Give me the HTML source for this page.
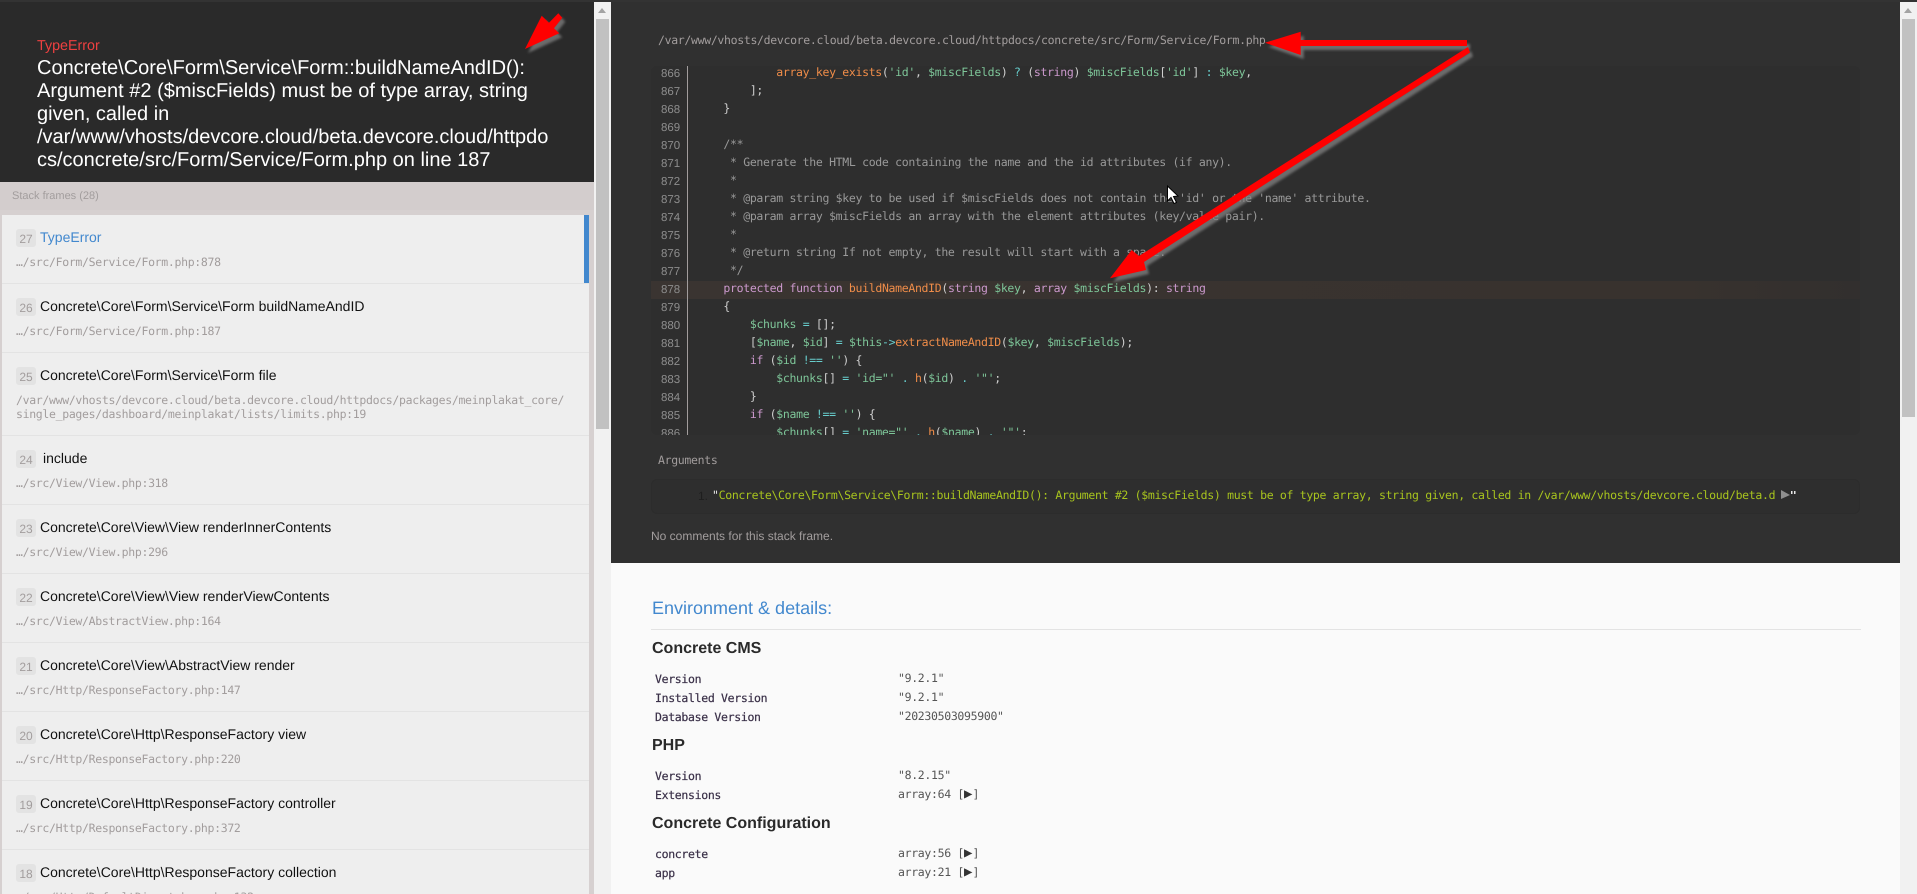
<!DOCTYPE html>
<html lang="en"><head><meta charset="utf-8"><title>TypeError</title>
<style>
*{box-sizing:border-box}
html,body{margin:0;padding:0;width:1917px;height:894px;overflow:hidden;background:#fafafa;text-rendering:geometricPrecision}
body{position:relative;font-family:"Liberation Sans",Arial,sans-serif;color:#222}
.a{position:absolute;white-space:nowrap}
.m{font-family:"DejaVu Sans Mono","Liberation Mono",monospace;font-size:11.5px;letter-spacing:-.32px}
#top{left:0;top:0;width:1917px;height:2px;background:#333;z-index:5}
.hd{left:0;top:0;width:594px;height:182px;background:#2a2a2a}
.msg{left:37px;color:#fff;font-size:20px;line-height:23px;height:23px}
.bar{left:0;top:182px;width:594px;height:712px;background:#d6d0d0}
.sf{left:0;top:182px;width:594px;height:28px;background:#d3cdcd;color:#a29d9d;font-size:11px;line-height:28px;padding-left:12px}
.f{left:2px;width:587px;background:#eee;border-bottom:1px solid #e3e3e3}
.n{position:absolute;left:14px;top:14px;width:20px;height:18px;background:#e3e3e3;border-radius:3px;color:#a29d9d;font-size:12px;line-height:20px;text-align:center}
.t{position:absolute;left:38px;top:12px;font-size:14px;line-height:20px;color:#111;white-space:nowrap}
.p{position:absolute;left:14px;top:40px;color:#a29d9d;line-height:14px;white-space:nowrap}
.track{top:2px;width:17px;height:892px;background:#f1f1f1}
.thumb{width:13px;background:#c1c1c1}
.up{width:0;height:0;border-left:4px solid transparent;border-right:4px solid transparent;border-bottom:5px solid #a3a3a3}
.dark{left:611px;top:0;width:1289px;height:563px;background:#303030}
.code{left:651px;top:66px;width:1209px;height:369px;background:#2e2e2e;border-radius:6px;overflow:hidden}
.hl{left:0;top:215px;width:1209px;height:18px;background:linear-gradient(90deg,#3a3431 0,#38322e 85%,#322f2e 100%)}
.g{left:36px;top:0;width:1px;height:369px;background:#a29d9d}
.ln{left:10px;width:20px;font-size:11.5px;line-height:18px;color:#8e8e8e}
.c{left:46px;color:#cfcfcf;line-height:18px;white-space:pre}
.k{color:#cc99cd}.v{color:#7ec699}.fn{color:#f08d49}.s{color:#7ec699}.o{color:#67cdcc}.cm{color:#999}
.args{left:651px;top:479px;width:1209px;height:35px;background:#2e2e2e;border:1px solid #2c2c2c;border-radius:6px}
.h3{left:652px;font-size:16px;font-weight:bold;color:#2a2a2a;line-height:20px}
.l{left:655px;color:#3a3048;line-height:14px;-webkit-text-stroke:.2px #3a3048}
.val{left:898px;color:#555;line-height:14px}
.tri{color:#333;font-size:14px;letter-spacing:0;line-height:10px}
</style></head><body>
<div class="a" id="top"></div>

<div class="a hd"></div>
<div class="a" style="left:37px;top:37px;font-size:14.3px;line-height:18px;color:#ee4040">TypeError</div>
<div class="a msg" style="top:57px">Concrete\Core\Form\Service\Form::buildNameAndID():</div>
<div class="a msg" style="top:80px">Argument #2 ($miscFields) must be of type array, string</div>
<div class="a msg" style="top:103px">given, called in</div>
<div class="a msg" style="top:126px">/var/www/vhosts/devcore.cloud/beta.devcore.cloud/httpdo</div>
<div class="a msg" style="top:149px">cs/concrete/src/Form/Service/Form.php on line 187</div>

<div class="a bar"></div>
<div class="a sf">Stack frames (28)</div>

<div class="a f" style="top:215px;height:69px"><span class="n">27</span><span class="t" style="color:#4288ce">TypeError</span><span class="p m">…/src/Form/Service/Form.php:878</span></div>
<div class="a" style="left:584px;top:215px;width:5px;height:68px;background:#4288ce"></div>
<div class="a f" style="top:284px;height:69px"><span class="n">26</span><span class="t">Concrete\Core\Form\Service\Form buildNameAndID</span><span class="p m">…/src/Form/Service/Form.php:187</span></div>
<div class="a f" style="top:353px;height:83px"><span class="n">25</span><span class="t">Concrete\Core\Form\Service\Form file</span><span class="p m">/var/www/vhosts/devcore.cloud/beta.devcore.cloud/httpdocs/packages/meinplakat_core/<br>single_pages/dashboard/meinplakat/lists/limits.php:19</span></div>
<div class="a f" style="top:436px;height:69px"><span class="n">24</span><span class="t" style="left:41px">include</span><span class="p m">…/src/View/View.php:318</span></div>
<div class="a f" style="top:505px;height:69px"><span class="n">23</span><span class="t">Concrete\Core\View\View renderInnerContents</span><span class="p m">…/src/View/View.php:296</span></div>
<div class="a f" style="top:574px;height:69px"><span class="n">22</span><span class="t">Concrete\Core\View\View renderViewContents</span><span class="p m">…/src/View/AbstractView.php:164</span></div>
<div class="a f" style="top:643px;height:69px"><span class="n">21</span><span class="t">Concrete\Core\View\AbstractView render</span><span class="p m">…/src/Http/ResponseFactory.php:147</span></div>
<div class="a f" style="top:712px;height:69px"><span class="n">20</span><span class="t">Concrete\Core\Http\ResponseFactory view</span><span class="p m">…/src/Http/ResponseFactory.php:220</span></div>
<div class="a f" style="top:781px;height:69px"><span class="n">19</span><span class="t">Concrete\Core\Http\ResponseFactory controller</span><span class="p m">…/src/Http/ResponseFactory.php:372</span></div>
<div class="a f" style="top:850px;height:69px"><span class="n">18</span><span class="t">Concrete\Core\Http\ResponseFactory collection</span><span class="p m">…/src/Http/DefaultDispatcher.php:132</span></div>

<div class="a track" style="left:594px"></div>
<div class="a up" style="left:598px;top:8px"></div>
<div class="a thumb" style="left:596px;top:19px;height:410px"></div>

<div class="a dark"></div>
<div class="a m" style="left:658px;top:33px;line-height:14px;color:#a29d9d">/var/www/vhosts/devcore.cloud/beta.devcore.cloud/httpdocs/concrete/src/Form/Service/Form.php</div>

<div class="a code">
<div class="a hl"></div>
<div class="a g"></div>
<div class="a ln" style="top:-1px">866</div>
<div class="a ln" style="top:17px">867</div>
<div class="a ln" style="top:35px">868</div>
<div class="a ln" style="top:53px">869</div>
<div class="a ln" style="top:71px">870</div>
<div class="a ln" style="top:89px">871</div>
<div class="a ln" style="top:107px">872</div>
<div class="a ln" style="top:125px">873</div>
<div class="a ln" style="top:143px">874</div>
<div class="a ln" style="top:161px">875</div>
<div class="a ln" style="top:179px">876</div>
<div class="a ln" style="top:197px">877</div>
<div class="a ln" style="top:215px">878</div>
<div class="a ln" style="top:233px">879</div>
<div class="a ln" style="top:251px">880</div>
<div class="a ln" style="top:269px">881</div>
<div class="a ln" style="top:287px">882</div>
<div class="a ln" style="top:305px">883</div>
<div class="a ln" style="top:323px">884</div>
<div class="a ln" style="top:341px">885</div>
<div class="a ln" style="top:359px">886</div>
<div class="a c m" style="top:-3px">            <span class="fn">array_key_exists</span>(<span class="s">'id'</span>, <span class="v">$miscFields</span>) <span class="o">?</span> (<span class="k">string</span>) <span class="v">$miscFields</span>[<span class="s">'id'</span>] <span class="o">:</span> <span class="v">$key</span>,</div>
<div class="a c m" style="top:15px">        ];</div>
<div class="a c m" style="top:33px">    }</div>
<div class="a c m cm" style="top:69px">    /**</div>
<div class="a c m cm" style="top:87px">     * Generate the HTML code containing the name and the id attributes (if any).</div>
<div class="a c m cm" style="top:105px">     *</div>
<div class="a c m cm" style="top:123px">     * @param string $key to be used if $miscFields does not contain the 'id' or the 'name' attribute.</div>
<div class="a c m cm" style="top:141px">     * @param array $miscFields an array with the element attributes (key/value pair).</div>
<div class="a c m cm" style="top:159px">     *</div>
<div class="a c m cm" style="top:177px">     * @return string If not empty, the result will start with a space.</div>
<div class="a c m cm" style="top:195px">     */</div>
<div class="a c m" style="top:213px">    <span class="k">protected</span> <span class="k">function</span> <span class="fn">buildNameAndID</span>(<span class="k">string</span> <span class="v">$key</span>, <span class="k">array</span> <span class="v">$miscFields</span>): <span class="k">string</span></div>
<div class="a c m" style="top:231px">    {</div>
<div class="a c m" style="top:249px">        <span class="v">$chunks</span> <span class="o">=</span> [];</div>
<div class="a c m" style="top:267px">        [<span class="v">$name</span>, <span class="v">$id</span>] <span class="o">=</span> <span class="v">$this</span><span class="o">-&gt;</span><span class="fn">extractNameAndID</span>(<span class="v">$key</span>, <span class="v">$miscFields</span>);</div>
<div class="a c m" style="top:285px">        <span class="k">if</span> (<span class="v">$id</span> <span class="o">!==</span> <span class="s">''</span>) {</div>
<div class="a c m" style="top:303px">            <span class="v">$chunks</span>[] <span class="o">=</span> <span class="s">'id="'</span> <span class="o">.</span> <span class="fn">h</span>(<span class="v">$id</span>) <span class="o">.</span> <span class="s">'"'</span>;</div>
<div class="a c m" style="top:321px">        }</div>
<div class="a c m" style="top:339px">        <span class="k">if</span> (<span class="v">$name</span> <span class="o">!==</span> <span class="s">''</span>) {</div>
<div class="a c m" style="top:357px">            <span class="v">$chunks</span>[] <span class="o">=</span> <span class="s">'name="'</span> <span class="o">.</span> <span class="fn">h</span>(<span class="v">$name</span>) <span class="o">.</span> <span class="s">'"'</span>;</div>
</div>

<div class="a m" style="left:658px;top:453px;line-height:14px;color:#a29d9d">Arguments</div>
<div class="a args"></div>
<div class="a" style="left:698px;top:489px;font-size:12px;line-height:14px;color:#1f1f1f">1.</div>
<div class="a m" style="left:712px;top:488px;line-height:14px;color:#a8c41e"><span style="color:#e8e8e8">"</span>Concrete\Core\Form\Service\Form::buildNameAndID(): Argument #2 ($miscFields) must be of type array, string given, called in /var/www/vhosts/devcore.cloud/beta.d</div>
<svg class="a" style="left:1780px;top:489px" width="20" height="12"><polygon points="1,1 1,10 10,6" fill="#8f8f8f"/><rect x="11" y="2" width="1.5" height="3" fill="#e8e8e8"/><rect x="14" y="2" width="1.5" height="3" fill="#e8e8e8"/></svg>
<div class="a" style="left:651px;top:529px;font-size:12px;line-height:14px;color:#a29d9d">No comments for this stack frame.</div>

<div class="a" style="left:652px;top:597px;font-size:18px;line-height:22px;color:#4288ce">Environment &amp; details:</div>
<div class="a" style="left:651px;top:629px;width:1210px;height:1px;background:#e3e3e3"></div>

<div class="a h3" style="top:639px">Concrete CMS</div>
<div class="a l m" style="top:672px">Version</div><div class="a val m" style="top:671px">"9.2.1"</div>
<div class="a l m" style="top:691px">Installed Version</div><div class="a val m" style="top:690px">"9.2.1"</div>
<div class="a l m" style="top:710px">Database Version</div><div class="a val m" style="top:709px">"20230503095900"</div>

<div class="a h3" style="top:736px">PHP</div>
<div class="a l m" style="top:769px">Version</div><div class="a val m" style="top:768px">"8.2.15"</div>
<div class="a l m" style="top:788px">Extensions</div><div class="a val m" style="top:787px">array:64 [<span class="tri">▶</span>]</div>

<div class="a h3" style="top:814px">Concrete Configuration</div>
<div class="a l m" style="top:847px">concrete</div><div class="a val m" style="top:846px">array:56 [<span class="tri">▶</span>]</div>
<div class="a l m" style="top:866px">app</div><div class="a val m" style="top:865px">array:21 [<span class="tri">▶</span>]</div>

<div class="a track" style="left:1900px"></div>
<div class="a up" style="left:1904px;top:8px"></div>
<div class="a thumb" style="left:1902px;top:19px;height:398px"></div>

<svg class="a" style="left:0;top:0;z-index:6;filter:drop-shadow(3px 4px 1.2px rgba(130,130,130,.75))" width="1917" height="894">
<polygon fill="#f00" points="525,49 541.7,15.7 549,22.7 558.3,13.3 562.3,17.7 554,28.3 559.3,33.3"/>
<polygon fill="#f00" points="1265,42.7 1300.7,31.7 1300.7,40 1467,40 1467,46 1300.7,46 1300.7,55"/>
<polygon fill="#f00" points="1110,278.3 1131.7,250 1139,256 1468,47 1470,52.5 1144,262 1146,270"/>
</svg>
<svg class="a" style="left:0;top:0;z-index:7" width="1917" height="894"><path d="M1167.5 186V201L1171 197.5L1174 203.5L1176.5 202.5L1173.5 196.5L1178 196Z" fill="#fff" stroke="#000" stroke-width="1"/></svg>
</body></html>
